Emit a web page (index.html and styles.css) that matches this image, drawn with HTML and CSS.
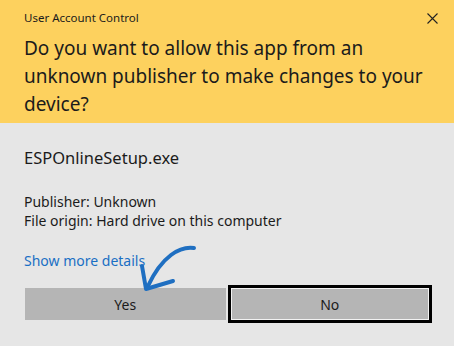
FILE: index.html
```html
<!DOCTYPE html>
<html>
    <head>
        <title> User Account Control </title>
        <meta charset="utf-8"/>
        <link rel="stylesheet" href="styles.css">
    </head>
    <body>

        <main class="dialog">

            <header class="banner">
                <div class="caption">
                    <span class="caption-title">User Account Control</span>
                    <span class="close">
                        <svg width="11" height="11" viewBox="0 0 11 11">
                            <path d="M0.5 0.5 L10.5 10.5 M10.5 0.5 L0.5 10.5" stroke="#222" stroke-width="1.1" fill="none"/>
                        </svg>
                    </span>
                </div>
                <h1 class="question">Do you want to allow this app from an unknown publisher to make changes to your device?</h1>
            </header>

            <section class="details">
                <h2 class="program">ESPOnlineSetup.exe</h2>
                <p class="info">Publisher: Unknown<br>File origin: Hard drive on this computer</p>
                <a class="more">Show more details</a>

                <div class="buttons">
                    <button class="yes">Yes</button>
                    <button class="no">No</button>
                </div>

                <!-- hand drawn arrow pointing at Yes -->
                <svg class="arrow" width="70" height="60" viewBox="0 0 70 60">
                    <path d="M62 6 C48 4 30 14 16 44" stroke="#1f6fc1" stroke-width="4" fill="none" stroke-linecap="round"/>
                    <path d="M10 24 L14 47 L41 39" stroke="#1f6fc1" stroke-width="4" fill="none" stroke-linecap="round" stroke-linejoin="round"/>
                </svg>
            </section>

        </main>

    </body>
</html>
```

FILE: styles.css
```css
* {
    margin: 0;
    padding: 0;
    box-sizing: border-box;
}

body {
    width: 454px;
    height: 346px;
    overflow: hidden;

    font-family: 'Noto Sans', sans-serif;
    color: #1b1b1b;
    background-color: #e6e6e6;
}

.dialog {
    width: 454px;
    height: 346px;
}

.banner {
    height: 123px;
    padding: 7px 16px 0 24px;

    background-color: #fdd15e;
}

.caption {
    height: 20px;

    display: flex;
    justify-content: space-between;
    align-items: center;
}

.caption-title {
    font-size: 11.5px;
}

.close {
    width: 11px;
    height: 11px;
    margin-top: 2px;
    display: flex;
}

.question {
    margin-top: 7px;

    font-size: 19px;
    font-weight: normal;
    line-height: 28px;
}

.details {
    position: relative;
    padding: 24px 22px 0 24px;
}

.program {
    font-size: 16.5px;
    font-weight: normal;
    line-height: 22px;
}

.info {
    margin-top: 23px;

    font-size: 14px;
    line-height: 19px;
}

.more {
    display: block;
    margin-top: 21px;

    font-size: 14px;
    line-height: 19px;
    color: #1a6fc4;
}

.buttons {
    margin-top: 15px;

    display: flex;
    align-items: center;
    gap: 2px;
}

.buttons button {
    height: 32px;

    border: none;
    background-color: #b5b5b5;
    font-family: 'Noto Sans', sans-serif;
    font-size: 14px;
    color: #1b1b1b;
}

.buttons .yes {
    width: 201px;
    margin-left: 1px;
}

.buttons .no {
    width: 205px;
    height: 38px;

    border: 3px solid #000;
    box-shadow: inset 0 0 0 1px #f2f2f2;
}

.arrow {
    position: absolute;
    left: 132px;
    top: 119px;
}
```
